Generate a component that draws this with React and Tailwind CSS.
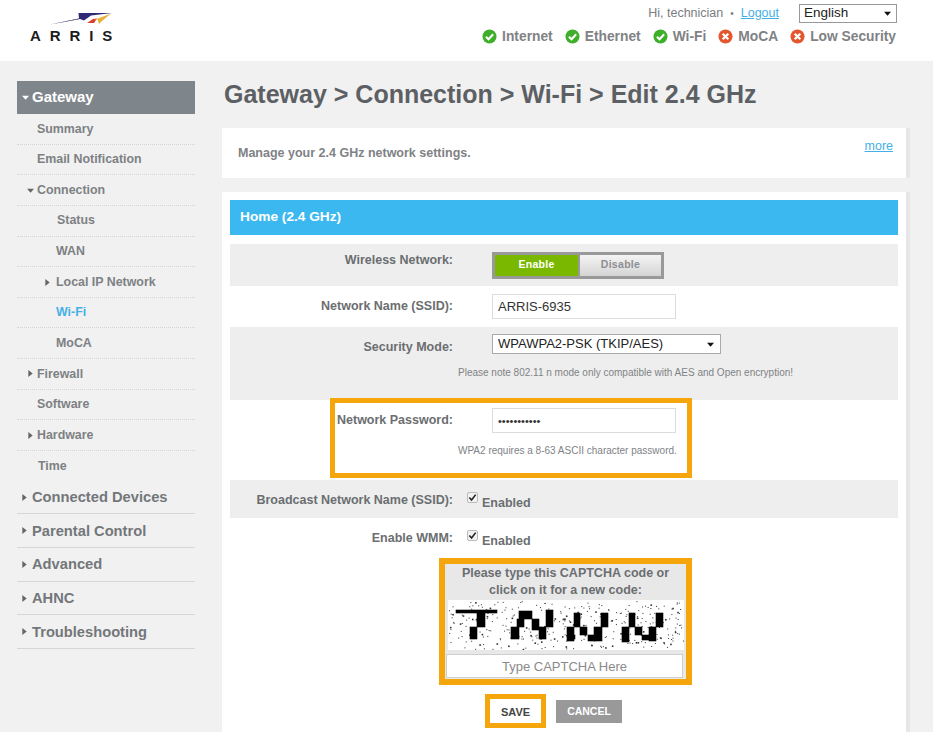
import React from 'react'

const FONT = "font-['Liberation_Sans',Arial,sans-serif]"

const STATUS = [
  { label: 'Internet', ok: true },
  { label: 'Ethernet', ok: true },
  { label: 'Wi-Fi', ok: true },
  { label: 'MoCA', ok: false },
  { label: 'Low Security', ok: false },
]

const SUB_NAV = [
  { label: 'Summary', indent: 'pl-[20px]' },
  { label: 'Email Notification', indent: 'pl-[20px]' },
  { label: 'Connection', indent: 'pl-[20px]', caret: 'down' },
  { label: 'Status', indent: 'pl-[40px]' },
  { label: 'WAN', indent: 'pl-[39px]' },
  { label: 'Local IP Network', indent: 'pl-[39px]', caret: 'right' },
  { label: 'Wi-Fi', indent: 'pl-[39px]', active: true },
  { label: 'MoCA', indent: 'pl-[39px]' },
  { label: 'Firewall', indent: 'pl-[20px]', caret: 'right' },
  { label: 'Software', indent: 'pl-[20px]' },
  { label: 'Hardware', indent: 'pl-[20px]', caret: 'right' },
  { label: 'Time', indent: 'pl-[21px]' },
]

const TOP_NAV = ['Connected Devices', 'Parental Control', 'Advanced', 'AHNC', 'Troubleshooting']

const CAPTCHA_BLOCKS = [
  [454, 610, 41, 3], [475, 613, 8, 14], [468, 627, 7, 12],
  [509, 627, 8, 12], [515, 619, 7, 8], [517, 611, 13, 8], [530, 619, 7, 11], [537, 627, 7, 12], [544, 610, 7, 17],
  [565, 627, 7, 14], [572, 613, 6, 14], [578, 627, 7, 8], [571, 635, 2, 4], [586, 635, 7, 6], [592, 627, 8, 14], [599, 613, 7, 14],
  [620, 627, 7, 15], [627, 613, 6, 14], [633, 627, 7, 8], [640, 635, 7, 5], [647, 627, 7, 14], [654, 613, 7, 14],
]

// fixed seed so the noise comes out the same every render
function captchaNoise() {
  let seed = 6935
  const next = () => {
    seed = (seed * 16807) % 2147483647
    return seed / 2147483647
  }
  return Array.from({ length: 340 }, () => ({
    x: 446 + next() * 236,
    y: 601 + next() * 48,
    s: next() > 0.8 ? 1.6 : 1,
  }))
}

const NOISE = captchaNoise()

function Logo() {
  return (
    <div className="ml-[30px] pt-[12px] w-[90px]">
      <svg viewBox="0 0 64 14" className="block ml-[19px] w-[64px] h-[14px]">
        <path d="M1 12.6 L30 6.6 L29.5 1 L63 1 L42 3.6 L35 8.6 L31 7 Z" fill="#2f2a78" />
        <path d="M1 12.6 L30 6.4 L30 7.2 Z" fill="#6b6a80" />
        <path d="M38 11 L44 7 L48 6.4 L45 11 Z" fill="#d8402a" />
        <path d="M45 8 L62 1.6 L53 9 L50 12 L48.5 7.6 Z" fill="#e9b23a" />
      </svg>
      <div className={`${FONT} mt-[2px] text-[15px] leading-[15px] font-bold tracking-[8.9px] text-[#1c1c1c] whitespace-nowrap`}>
        ARRIS
      </div>
    </div>
  )
}

function StatusIcon({ ok }) {
  return (
    <svg viewBox="0 0 16 16" className="w-[15px] h-[15px] shrink-0 mb-[1px]">
      <circle cx="8" cy="8" r="7.5" fill={ok ? '#3fae2a' : '#e4572e'} />
      {ok ? (
        <path d="M4.2 8.2 L7 11 L11.9 5.6" fill="none" stroke="#fff" strokeWidth="2.2" />
      ) : (
        <path d="M5 5 L11 11 M11 5 L5 11" fill="none" stroke="#fff" strokeWidth="2.4" />
      )}
    </svg>
  )
}

function Caret({ dir, className = '' }) {
  return (
    <svg viewBox="0 0 8 8" className={`w-[7px] h-[7px] ${className}`}>
      {dir === 'down' ? <path d="M0 2 H8 L4 6.5 Z" fill="currentColor" /> : <path d="M1.5 0 L6.5 4 L1.5 8 Z" fill="currentColor" />}
    </svg>
  )
}

function Header() {
  return (
    <header className="h-[61px] bg-white flex justify-between shrink-0">
      <Logo />
      <div className="pr-[36px] pt-[3px] flex flex-col items-end">
        <div className="flex items-center h-[20px] text-[12.5px] text-[#7a7d80]">
          <span>Hi, technician</span>
          <span className="mx-[7px] text-[10px]">•</span>
          <a className="text-[#45b0e6] underline mr-[20px]">Logout</a>
          <div className="relative w-[98px] h-[19px] border border-[#999] bg-white">
            <select className="appearance-none block w-full h-full pl-[4px] pt-0 pb-[2px] text-[13.5px] leading-[15px] text-[#222] bg-transparent outline-none">
              <option>English</option>
            </select>
            <Caret dir="down" className="absolute right-[5px] top-[5px] text-[#111]" />
          </div>
        </div>
        <div className="flex items-center mt-[4px] mr-[1px] gap-[12px] text-[13.8px] font-bold text-[#808285]">
          {STATUS.map((s) => (
            <div key={s.label} className="flex items-center gap-[5px]">
              <StatusIcon ok={s.ok} />
              <span>{s.label}</span>
            </div>
          ))}
        </div>
      </div>
    </header>
  )
}

function Sidebar() {
  return (
    <aside className="w-[178px] ml-[17px] mt-[20px] shrink-0">
      <div className="h-[33px] bg-[#7f868b] flex items-center pl-[5px] text-[15px] font-bold text-white">
        <Caret dir="down" className="mr-[3px] w-[6px] h-[6px] text-white" />
        Gateway
      </div>
      <ul>
        {SUB_NAV.map((item, i) => (
          <li
            key={item.label}
            className={`relative h-[30.65px] flex items-center text-[12.4px] font-bold border-[#d4d4d4] ${item.indent} ${
              item.active ? 'text-[#45b0e6]' : 'text-[#7d8184]'
            } ${i < SUB_NAV.length - 1 ? 'border-b border-dotted' : ''}`}
          >
            {item.caret && (
              <Caret
                dir={item.caret}
                className={`absolute text-[#666] ${item.caret === 'down' ? 'left-[10px]' : item.indent === 'pl-[39px]' ? 'left-[27px]' : 'left-[10px]'}`}
              />
            )}
            {item.label}
          </li>
        ))}
      </ul>
      <ul className="-mt-[1px]">
        {TOP_NAV.map((label) => (
          <li key={label} className="h-[33.7px] flex items-center pl-[4px] text-[14.7px] font-bold text-[#73777a] border-b border-[#d6d6d6]">
            <Caret dir="right" className="w-[6px] h-[6px] text-[#666]" />
            <span className="ml-[4px]">{label}</span>
          </li>
        ))}
      </ul>
    </aside>
  )
}

function Row({ label, shade, height, top = 'pt-[8px]', labelTop = '', children, className = '' }) {
  return (
    <div className={`flex ${height} ${top} ${shade ? 'bg-[#eeeeee]' : ''} ${className}`}>
      <div className={`w-[223px] text-right text-[12.5px] font-bold text-[#6b6e71] leading-[16px] shrink-0 ${labelTop}`}>{label}</div>
      <div className="ml-[39px] flex-1 min-w-0">{children}</div>
    </div>
  )
}

function Enabled() {
  return (
    <label className="flex items-start text-[12.5px] font-bold text-[#6b6e71]">
      <span className="w-[11px] h-[11px] rounded-[2px] border border-[#bbb] bg-[#f2f2f2] flex items-center justify-center mt-[1px] mr-[4px]">
        <svg viewBox="0 0 10 10" className="w-[9px] h-[9px]">
          <path d="M1.5 5 L4 7.8 L8.5 1.8" fill="none" stroke="#222" strokeWidth="1.8" />
        </svg>
      </span>
      <span className="mt-[3px]">Enabled</span>
    </label>
  )
}

function Captcha() {
  return (
    <div className="ml-[209px] w-[253px] h-[127px] border-[6px] border-[#f5a60c] bg-[#e8e8e8] flex flex-col items-center">
      <div className="pt-[1px] w-full text-center text-[12.5px] leading-[17px] font-bold text-[#6b6e71] whitespace-nowrap">
        Please type this CAPTCHA code or
        <br />
        click on it for a new code:
      </div>
      <svg viewBox="446 600 236 50" className="block mt-[1px] w-[236px] h-[50px] bg-white">
        {NOISE.map((d, i) => (
          <rect key={i} x={d.x} y={d.y} width={d.s} height={d.s} fill="#333" />
        ))}
        {CAPTCHA_BLOCKS.map(([x, y, w, h], i) => (
          <rect key={i} x={x} y={y} width={w} height={h} fill="#000" stroke="#000" strokeWidth="0.6" />
        ))}
      </svg>
      <input
        placeholder="Type CAPTCHA Here"
        className="mt-[4px] self-start ml-[1px] w-[237px] h-[24px] border border-[#cfcfcf] bg-white text-center text-[13px] text-[#777] placeholder:text-[#8a8a8a] outline-none"
      />
    </div>
  )
}

function Form() {
  return (
    <section className="mt-[14px] bg-white px-[8px] pt-[8px] flex-1 mr-[23px] border-r-[4px] border-[#e7e7e7]">
      <div className="h-[35px] bg-[#3bb8f0] flex items-center pl-[10px] text-[13.7px] font-bold text-white">Home (2.4 GHz)</div>
      <div className="mt-[9px]">
        <Row label="Wireless Network:" shade height="h-[42px]">
          <div className="w-[172px] h-[27px] border-[3px] border-[#999] bg-[#999] flex gap-[2px] text-[10.5px] font-bold tracking-[0.3px]">
            <div className="w-[83px] bg-[#7ab800] text-white flex items-center justify-center pb-[1px]">Enable</div>
            <div className="flex-1 bg-gradient-to-b from-[#f4f4f4] to-[#d4d4d4] text-[#8c8f92] flex items-center justify-center pb-[1px]">Disable</div>
          </div>
        </Row>
        <Row label="Network Name (SSID):" height="h-[41px]" top="pt-[8px]" labelTop="mt-[4px]">
          <input
            defaultValue="ARRIS-6935"
            className="block w-[184px] h-[25px] border border-[#dcdcdc] pl-[5px] text-[13px] text-[#333] outline-none"
          />
        </Row>
        <Row label="Security Mode:" shade height="h-[73px]" top="pt-[11px]" labelTop="mt-[1px]">
          <div className="relative w-[229px] h-[20px] border border-[#aaa] bg-white -mt-[4px]">
            <select className="appearance-none block w-full h-full pl-[5px] py-0 text-[13px] leading-[18px] text-[#222] bg-transparent outline-none">
              <option>WPAWPA2-PSK (TKIP/AES)</option>
            </select>
            <Caret dir="down" className="absolute right-[6px] top-[6px] text-[#111]" />
          </div>
          <p className="-ml-[34px] mt-[13px] text-[10px] leading-[12px] text-[#808285] whitespace-nowrap">
            Please note 802.11 n mode only compatible with AES and Open encryption!
          </p>
        </Row>
        <Row label="Network Password:" height="h-[80px]" top="pt-[12px]" className="relative">
          <input
            type="password"
            defaultValue="abcdefghijk"
            className="block w-[184px] h-[25px] -mt-[4px] border border-[#dcdcdc] pl-[5px] text-[11px] text-[#333] outline-none"
          />
          <p className="-ml-[34px] mt-[12px] text-[10px] leading-[12px] text-[#808285] whitespace-nowrap">
            WPA2 requires a 8-63 ASCII character password.
          </p>
          <div className="absolute left-[100px] -top-[2px] w-[362px] h-[80px] border-[5px] border-[#f5a60c] pointer-events-none" />
        </Row>
        <Row label="Broadcast Network Name (SSID):" shade height="h-[38px]" top="pt-[11px]" labelTop="mt-[1px]">
          <div className="-ml-[25px]">
            <Enabled />
          </div>
        </Row>
        <Row label="Enable WMM:" height="h-[40px]" top="pt-[11px]" labelTop="mt-[1px]">
          <div className="-ml-[25px]">
            <Enabled />
          </div>
        </Row>
        <Captcha />
        <div className="flex items-start ml-[255px] mt-[9px] gap-[10px]">
          <button className="w-[61px] h-[34px] border-[5px] border-[#f5a60c] bg-white pt-[2px] text-[11px] font-bold text-[#444]">SAVE</button>
          <button className="w-[66px] h-[23px] mt-[6px] bg-[#999] text-[10.5px] font-bold text-white">CANCEL</button>
        </div>
      </div>
    </section>
  )
}

export default function App() {
  return (
    <div className={`${FONT} w-[933px] h-[732px] overflow-hidden bg-[#f1f1f1] flex flex-col`}>
      <Header />
      <div className="flex flex-1 min-h-0">
        <Sidebar />
        <main className="ml-[27px] flex-1 min-w-0 flex flex-col">
          <h1 className="ml-[2px] mt-[17px] h-[32px] text-[25px] leading-[32px] font-bold text-[#5c6064]">
            Gateway &gt; Connection &gt; Wi-Fi &gt; Edit 2.4 GHz
          </h1>
          <div className="mt-[18px] mr-[23px] h-[50px] bg-white flex justify-between pl-[16px] pr-[13px] border-r-[4px] border-[#e7e7e7]">
            <p className="pt-[16px] text-[12.5px] font-bold text-[#808285]">Manage your 2.4 GHz network settings.</p>
            <a className="pt-[9px] text-[12.5px] text-[#45b0e6] underline">more</a>
          </div>
          <Form />
        </main>
      </div>
    </div>
  )
}
